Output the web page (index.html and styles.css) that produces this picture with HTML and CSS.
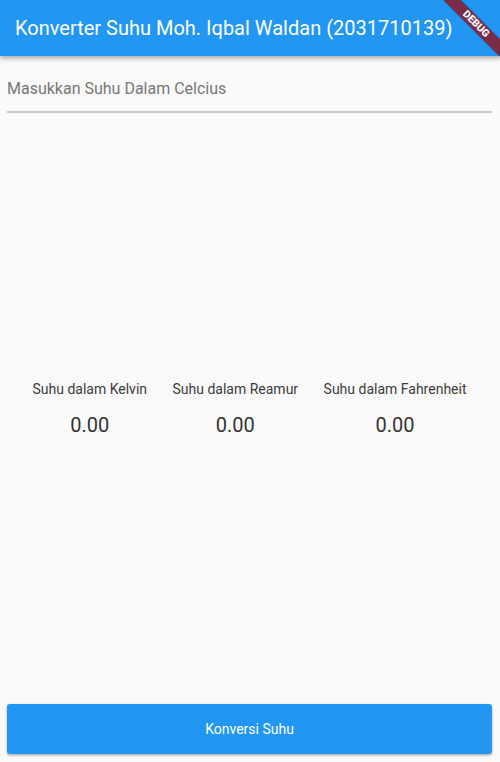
FILE: index.html
```html
<!DOCTYPE html>
<html lang="en">
<head>
    <meta charset="UTF-8">
    <title>Konverter Suhu</title>
    <link rel="stylesheet" href="styles.css">
</head>
<body>
<div id="app">
    <div class="app-bar">
        <h1 class="app-title">Konverter Suhu Moh. Iqbal Waldan (2031710139)</h1>
    </div>
    <div class="debug-banner">DEBUG</div>
    <div class="content">
        <div class="field">
            <input type="text" placeholder="Masukkan Suhu Dalam Celcius">
        </div>
        <div class="results">
            <div class="result">
                <span class="result-label">Suhu dalam Kelvin</span>
                <span class="result-value">0.00</span>
            </div>
            <div class="result">
                <span class="result-label">Suhu dalam Reamur</span>
                <span class="result-value">0.00</span>
            </div>
            <div class="result">
                <span class="result-label">Suhu dalam Fahrenheit</span>
                <span class="result-value">0.00</span>
            </div>
        </div>
        <button class="convert-btn">Konversi Suhu</button>
    </div>
</div>
</body>
</html>
```
FILE: styles.css
```css
* {
    padding: 0;
    margin: 0;
    box-sizing: border-box;
}

body {
    background: #fafafa;
    font-family: Roboto, "Noto Sans", sans-serif;
    overflow: hidden;
}

#app {
    width: 500px;
    height: 762px;
    position: relative;
    display: flex;
    flex-direction: column;
}

.app-bar {
    height: 56px;
    flex: none;
    background: #2196f3;
    display: flex;
    align-items: center;
    padding-left: 15px;
    box-shadow: 0 2px 4px rgba(0, 0, 0, .22), 0 4px 5px rgba(0, 0, 0, .1);
    position: relative;
    z-index: 1;
}

.app-title {
    color: #ffffff;
    font-size: 20px;
    font-weight: 400;
    white-space: nowrap;
}

.debug-banner {
    position: absolute;
    left: 436px;
    top: 18px;
    width: 80px;
    height: 12px;
    transform: rotate(45deg);
    background: #7b2a47;
    box-shadow: 0 0 2px rgba(0, 0, 0, .4);
    color: #ffffff;
    font-size: 10.2px;
    font-weight: 900;
    line-height: 12px;
    text-align: center;
    z-index: 2;
}

.content {
    flex: 1;
    display: flex;
    flex-direction: column;
    padding: 8px 8px 8px 7px;
}

.field {
    border-bottom: 2px solid #c9c9c9;
    height: 49px;
    display: flex;
    align-items: center;
}

.field input {
    width: 100%;
    border: none;
    outline: none;
    background: transparent;
    font-family: Roboto, "Noto Sans", sans-serif;
    font-size: 16px;
    color: rgba(0, 0, 0, .87);
    padding-top: 2px;
}

.field input::placeholder {
    color: #777777;
}

.results {
    flex: 1;
    display: flex;
    justify-content: space-evenly;
    align-items: center;
    padding-top: 1px;
}

.result {
    display: flex;
    flex-direction: column;
    align-items: center;
    gap: 16px;
}

.result-label {
    font-size: 14px;
    color: #3c3c3c;
}

.result-value {
    font-size: 20px;
    color: #333333;
}

.convert-btn {
    height: 50px;
    border: none;
    border-radius: 3px;
    background: #2196f3;
    color: #ffffff;
    font-family: Roboto, "Noto Sans", sans-serif;
    font-size: 14px;
    font-weight: 400;
    box-shadow: 0 1px 3px rgba(0, 0, 0, .25), 0 2px 2px rgba(0, 0, 0, .1);
    cursor: pointer;
}
```
